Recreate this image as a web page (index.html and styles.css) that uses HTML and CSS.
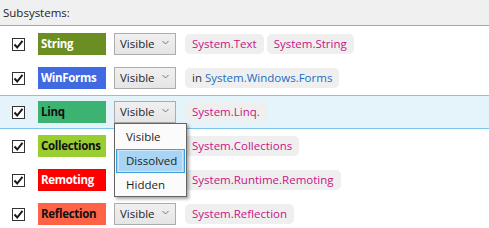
FILE: index.html
```html
<!DOCTYPE html>
<html lang="en">
<head>
  <meta charset="UTF-8">
  <title>Subsystems</title>
  <link rel="stylesheet" href="styles.css">
</head>
<body>

  <div class="header">Subsystems:</div>

  <div class="list">
    <div class="row">
      <span class="check"><svg width="11" height="11" viewBox="0 0 11 11"><path d="M1.5 5.5 L4.2 8.5 L9.5 1.8" fill="none" stroke="#1a1a1a" stroke-width="2"/></svg></span>
      <span class="label l-string">String</span>
      <span class="combo">Visible<svg class="chev" width="7" height="5" viewBox="0 0 7 5"><path d="M0.5 1 L3.5 4 L6.5 1" fill="none" stroke="#777" stroke-width="1"/></svg></span>
      <span class="tag">System.Text</span>
      <span class="tag">System.String</span>
    </div>

    <div class="row">
      <span class="check"><svg width="11" height="11" viewBox="0 0 11 11"><path d="M1.5 5.5 L4.2 8.5 L9.5 1.8" fill="none" stroke="#1a1a1a" stroke-width="2"/></svg></span>
      <span class="label l-winforms">WinForms</span>
      <span class="combo">Visible<svg class="chev" width="7" height="5" viewBox="0 0 7 5"><path d="M0.5 1 L3.5 4 L6.5 1" fill="none" stroke="#777" stroke-width="1"/></svg></span>
      <span class="tag"><span class="in">in</span> <span class="ns">System.Windows.Forms</span></span>
    </div>

    <div class="row selected">
      <span class="check"><svg width="11" height="11" viewBox="0 0 11 11"><path d="M1.5 5.5 L4.2 8.5 L9.5 1.8" fill="none" stroke="#1a1a1a" stroke-width="2"/></svg></span>
      <span class="label l-linq dark">Linq</span>
      <span class="combo">Visible<svg class="chev" width="7" height="5" viewBox="0 0 7 5"><path d="M0.5 1 L3.5 4 L6.5 1" fill="none" stroke="#777" stroke-width="1"/></svg></span>
      <span class="tag">System.Linq.</span>
    </div>

    <div class="row">
      <span class="check"><svg width="11" height="11" viewBox="0 0 11 11"><path d="M1.5 5.5 L4.2 8.5 L9.5 1.8" fill="none" stroke="#1a1a1a" stroke-width="2"/></svg></span>
      <span class="label l-collections dark">Collections</span>
      <span class="combo">Visible<svg class="chev" width="7" height="5" viewBox="0 0 7 5"><path d="M0.5 1 L3.5 4 L6.5 1" fill="none" stroke="#777" stroke-width="1"/></svg></span>
      <span class="tag">System.Collections</span>
    </div>

    <div class="row">
      <span class="check"><svg width="11" height="11" viewBox="0 0 11 11"><path d="M1.5 5.5 L4.2 8.5 L9.5 1.8" fill="none" stroke="#1a1a1a" stroke-width="2"/></svg></span>
      <span class="label l-remoting">Remoting</span>
      <span class="combo">Visible<svg class="chev" width="7" height="5" viewBox="0 0 7 5"><path d="M0.5 1 L3.5 4 L6.5 1" fill="none" stroke="#777" stroke-width="1"/></svg></span>
      <span class="tag">System.Runtime.Remoting</span>
    </div>

    <div class="row">
      <span class="check"><svg width="11" height="11" viewBox="0 0 11 11"><path d="M1.5 5.5 L4.2 8.5 L9.5 1.8" fill="none" stroke="#1a1a1a" stroke-width="2"/></svg></span>
      <span class="label l-reflection dark">Reflection</span>
      <span class="combo">Visible<svg class="chev" width="7" height="5" viewBox="0 0 7 5"><path d="M0.5 1 L3.5 4 L6.5 1" fill="none" stroke="#777" stroke-width="1"/></svg></span>
      <span class="tag">System.Reflection</span>
    </div>
  </div>

  <!-- open drop-down of the Linq row -->
  <div class="popup">
    <div class="option">Visible</div>
    <div class="option active"><span>Dissolved</span></div>
    <div class="option">Hidden</div>
  </div>

</body>
</html>
```

FILE: styles.css
```css
body {
  font-family: 'Open Sans', 'Noto Sans', sans-serif;
  font-size: 11.5px;
  color: #1e1e1e;
  margin: 0;
  padding: 0;
  background-color: #fff;
  overflow: hidden;
}

.header {
  height: 26px;
  line-height: 25px;
  padding-left: 3px;
  background-color: #f0f0f0;
  border-bottom: 1px solid #a5a5a5;
  box-sizing: border-box;
}

.list {
  padding-top: 1px;
}

.row {
  display: flex;
  align-items: center;
  height: 34px;
  box-sizing: border-box;
  padding-left: 12px;
}

.row.selected {
  background-color: #e5f3fb;
  border-top: 1px solid #7ec4ec;
  border-bottom: 1px solid #7ec4ec;
}

.check {
  width: 13px;
  height: 13px;
  box-sizing: border-box;
  border: 1px solid #333;
  background-color: #fff;
  display: flex;
  align-items: center;
  justify-content: center;
  margin-right: 13px;
}

.label {
  width: 68px;
  height: 22px;
  line-height: 22px;
  padding-left: 3px;
  box-sizing: border-box;
  font-weight: bold;
  letter-spacing: -0.3px;
  color: #fff;
  margin-right: 8px;
  white-space: nowrap;
  overflow: hidden;
}

.label.dark {
  color: #111;
}

.l-string { background-color: #6b8e23; }
.l-winforms { background-color: #4169e1; }
.l-linq { background-color: #3cb371; }
.l-collections { background-color: #9acd32; }
.l-remoting { background-color: #ff0000; }
.l-reflection { background-color: #ff6347; }

.combo {
  width: 62px;
  height: 22px;
  box-sizing: border-box;
  border: 1px solid #acacac;
  background: linear-gradient(#f0f0f0, #e5e5e5);
  padding-left: 5px;
  line-height: 20px;
  display: flex;
  align-items: center;
  margin-right: 9px;
}

.chev {
  margin-left: auto;
  margin-right: 6px;
  margin-top: -3px;
}

.tag {
  height: 20px;
  line-height: 20px;
  padding: 0 7px;
  border-radius: 5px;
  background-color: #efefef;
  color: #c71585;
  margin-right: 3px;
  white-space: nowrap;
}

.tag .in {
  color: #333;
}

.tag .ns {
  color: #1b6ec2;
}

.popup {
  position: absolute;
  left: 114px;
  top: 123px;
  width: 73px;
  height: 74px;
  box-sizing: border-box;
  border: 1px solid #646464;
  background-color: #fbfbfb;
  box-shadow: 2px 2px 3px rgba(0, 0, 0, 0.35);
  padding: 1px;
}

.option {
  height: 24px;
  line-height: 23px;
  padding-left: 10px;
  box-sizing: border-box;
}

.option.active {
  border: 1px solid #3d9ee0;
  background-color: #a9d4f4;
  padding-left: 1px;
}

.option.active span {
  display: block;
  border: 1px solid #cde8fa;
  height: 20px;
  line-height: 19px;
  padding-left: 7px;
  margin-right: 1px;
}
```
